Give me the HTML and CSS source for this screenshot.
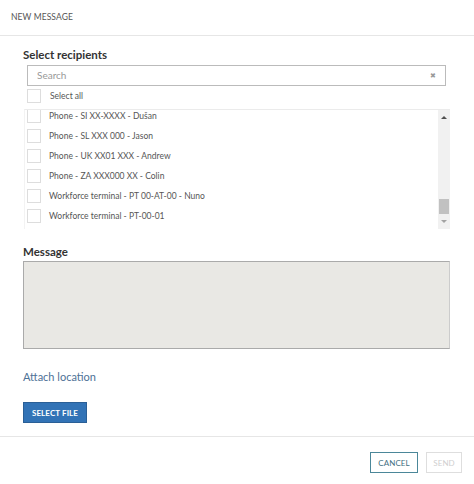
FILE: index.html
```html
<!DOCTYPE html>
<html>
<head>
<meta charset="utf-8">
<link rel="stylesheet" href="styles.css">
</head>
<body>
<div class="dialog">
  <div class="header">NEW MESSAGE</div>
  <div class="content">
    <div class="label">Select recipients</div>
    <div class="search">
      <span class="placeholder">Search</span>
      <span class="clear">&#x2716;</span>
    </div>
    <div class="row select-all"><span class="cb"></span><span>Select all</span></div>
    <div class="list">
      <div class="rows">
        <div class="row"><span class="cb"></span><span>Phone - SI XX-XXXX - Dušan</span></div>
        <div class="row"><span class="cb"></span><span>Phone - SL XXX 000 - Jason</span></div>
        <div class="row"><span class="cb"></span><span>Phone - UK XX01 XXX - Andrew</span></div>
        <div class="row"><span class="cb"></span><span>Phone - ZA XXX000 XX - Colin</span></div>
        <div class="row"><span class="cb"></span><span>Workforce terminal - PT 00-AT-00 - Nuno</span></div>
        <div class="row"><span class="cb"></span><span>Workforce terminal - PT-00-01</span></div>
      </div>
      <div class="scrollbar">
        <span class="arrow up"></span>
        <span class="track"><span class="thumb"></span></span>
        <span class="arrow down"></span>
      </div>
    </div>
    <div class="label message-label">Message</div>
    <div class="textarea"></div>
    <div class="link">Attach location</div>
    <div class="file-row"><span class="btn primary">SELECT FILE</span></div>
  </div>
  <div class="footer">
    <span class="btn outline">CANCEL</span>
    <span class="btn disabled">SEND</span>
  </div>
</div>
</body>
</html>
```
FILE: styles.css
```css
* { box-sizing: border-box; }
html, body { margin: 0; padding: 0; background: #fff; }
body {
  font-family: Lato, "Open Sans", sans-serif;
  color: #555;
  width: 474px;
  height: 484px;
  overflow: hidden;
}
.header {
  height: 36px;
  line-height: 34px;
  padding-left: 11px;
  font-size: 8.5px;
  color: #555;
  letter-spacing: 0.1px;
  border-bottom: 1px solid #e6e6e6;
}
.content {
  padding: 0 24px 0 23px;
  display: flex;
  flex-direction: column;
}
.label {
  margin-top: 12px;
  height: 14px;
  line-height: 14px;
  font-size: 11.5px;
  font-weight: 700;
  color: #333;
}
.search {
  margin: 3px 4px 0 4px;
  height: 21px;
  border: 1px solid #bbb;
  display: flex;
  align-items: center;
  justify-content: space-between;
  padding: 0 9px 1px 9px;
}
.placeholder { font-size: 10px; color: #999; }
.clear { font-size: 7px; color: #999; }
.row {
  height: 20px;
  display: flex;
  align-items: center;
  gap: 9px;
  font-size: 8.5px;
  color: #555;
}
.cb {
  width: 14px;
  height: 14px;
  border: 1px solid #ddd;
  background: #fff;
  flex: none;
}
.select-all { padding-left: 4px; }
.list {
  margin-top: 3px;
  margin-left: 1px;
  height: 120px;
  border-top: 1px solid #ebebeb;
  border-left: 1px solid #f3f3f3;
  display: flex;
  overflow: hidden;
}
.rows {
  flex: 1;
  margin-top: -4px;
  padding-left: 2px;
}
.rows .row { gap: 8px; }
.scrollbar {
  width: 12px;
  background: #f1f1f1;
  display: flex;
  flex-direction: column;
  align-items: center;
  padding: 4px 0 2px 0;
}
.arrow {
  width: 0;
  height: 0;
  border-left: 3px solid transparent;
  border-right: 3px solid transparent;
  flex: none;
}
.arrow.up { border-bottom: 3px solid #505050; margin-top: 2px; }
.arrow.down { border-top: 3px solid #a3a3a3; margin-bottom: 4px; }
.track {
  flex: 1;
  width: 10px;
  display: flex;
  flex-direction: column;
  justify-content: flex-end;
  padding-bottom: 6px;
}
.thumb {
  height: 15px;
  width: 10px;
  background: #c1c1c1;
}
.message-label { margin-top: 16px; }
.textarea {
  margin-top: 2px;
  height: 88px;
  background: #e9e8e4;
  border: 1px solid #aaa;
  border-right-color: #ccc;
}
.link {
  margin-top: 21px;
  height: 14px;
  line-height: 14px;
  font-size: 11px;
  color: #4d7196;
}
.file-row { margin-top: 18px; display: flex; }
.btn {
  display: inline-flex;
  align-items: center;
  justify-content: center;
  height: 21px;
  font-size: 8px;
  letter-spacing: 0.1px;
}
.primary {
  width: 64px;
  background: #3273b6;
  color: #fff;
  font-weight: 700;
  border: 1px solid #2a5f96;
}
.footer {
  margin-top: 13px;
  border-top: 1px solid #e6e6e6;
  padding: 15px 12px 0 0;
  display: flex;
  justify-content: flex-end;
  gap: 8px;
}
.outline {
  width: 48px;
  border: 1px solid #4b8799;
  color: #3f6f82;
}
.disabled {
  width: 36px;
  border: 1px solid #dedede;
  color: #cfcfcf;
}
```
